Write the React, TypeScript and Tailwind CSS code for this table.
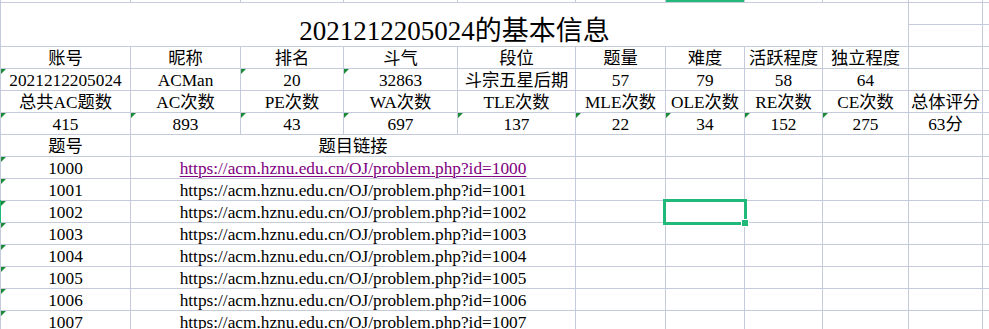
import type { ReactNode } from 'react';

const GREEN = 'bg-[#21b97a]';

function Tri() {
  return (
    <span className="absolute left-0 top-0 h-0 w-0 border-t-[5px] border-r-[5px] border-t-[#1d8a3a] border-r-transparent" />
  );
}

interface CellProps {
  children?: ReactNode;
  tri?: boolean;
  className?: string;
}

function Cell({ children, tri, className = '' }: CellProps) {
  return (
    <div
      className={`relative flex items-end justify-center whitespace-nowrap bg-white pb-px leading-none ${className}`}
    >
      {tri && <Tri />}
      {children}
    </div>
  );
}

const headers = ['账号', '昵称', '排名', '斗气', '段位', '题量', '难度', '活跃程度', '独立程度', '', ''];
const values: [string, boolean][] = [
  ['2021212205024', true],
  ['ACMan', false],
  ['20', true],
  ['32863', true],
  ['斗宗五星后期', false],
  ['57', false],
  ['79', false],
  ['58', false],
  ['64', false],
  ['', false],
  ['', false],
];
const headers2 = ['总共AC题数', 'AC次数', 'PE次数', 'WA次数', 'TLE次数', 'MLE次数', 'OLE次数', 'RE次数', 'CE次数', '总体评分', ''];
const values2: [string, boolean][] = [
  ['415', true],
  ['893', true],
  ['43', true],
  ['697', true],
  ['137', true],
  ['22', true],
  ['34', true],
  ['152', true],
  ['275', true],
  ['63分', false],
  ['', false],
];

const problems = [1000, 1001, 1002, 1003, 1004, 1005, 1006, 1007];

export default function App() {
  return (
    <div className="h-[329px] w-[989px] overflow-hidden bg-white">
      <div className="grid grid-cols-[129px_109px_102px_113px_117px_89px_78px_77px_85px_73px_1fr] grid-rows-[2px] auto-rows-[21px] gap-px bg-[#c6cbdc] pl-px font-['Liberation_Serif','Noto_Sans_CJK_SC',serif] text-[17.3px] text-black">
        {/* cut-off first row, column G header highlight */}
        {Array.from({ length: 11 }).map((_, i) => (
          <div key={`top-${i}`} className={i === 6 ? GREEN : 'bg-white'} />
        ))}

        {/* title */}
        <Cell className="col-span-9 row-span-2 pb-[3px] text-[27px]">2021212205024的基本信息</Cell>
        <Cell />
        <Cell />
        <Cell />
        <Cell />

        {headers.map((h, i) => (
          <Cell key={`h-${i}`}>{h}</Cell>
        ))}
        {values.map(([v, tri], i) => (
          <Cell key={`v-${i}`} tri={tri}>
            {v}
          </Cell>
        ))}
        {headers2.map((h, i) => (
          <Cell key={`h2-${i}`}>{h}</Cell>
        ))}
        {values2.map(([v, tri], i) => (
          <Cell key={`v2-${i}`} tri={tri}>
            {v}
          </Cell>
        ))}

        {/* problem list */}
        <Cell>题号</Cell>
        <Cell className="col-span-4">题目链接</Cell>
        {Array.from({ length: 6 }).map((_, i) => (
          <Cell key={`ph-${i}`} />
        ))}

        {problems.map((id, row) => (
          <div key={id} className="contents">
            <Cell tri>
              {row === 2 && <span className={`absolute -left-px -top-px -bottom-px w-px ${GREEN}`} />}
              {id}
            </Cell>
            <Cell className="col-span-4">
              {row === 0 ? (
                <span className="text-[#800080] underline decoration-1 underline-offset-2">
                  https://acm.hznu.edu.cn/OJ/problem.php?id={id}
                </span>
              ) : (
                <span>https://acm.hznu.edu.cn/OJ/problem.php?id={id}</span>
              )}
            </Cell>
            <Cell />
            <Cell>
              {row === 2 && (
                <>
                  <span className="absolute -left-[3px] -right-[3px] -top-[2px] -bottom-[3px] z-10 border-[3px] border-[#21b97a]" />
                  <span className={`absolute -bottom-[4px] -right-[4px] z-20 h-[6px] w-[6px] outline outline-1 outline-white ${GREEN}`} />
                </>
              )}
            </Cell>
            <Cell />
            <Cell />
            <Cell />
            <Cell />
          </div>
        ))}
      </div>
    </div>
  );
}
